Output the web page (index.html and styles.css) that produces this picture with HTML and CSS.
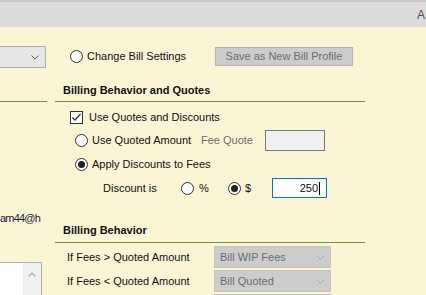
FILE: index.html
```html
<!DOCTYPE html>
<html>
<head>
  <title>Bill Settings</title>
  <link rel="stylesheet" href="styles.css">
</head>
<body>
  <div class="titlebar"><span>A</span></div>

  <div class="pane">
    <div class="left">
      <div class="combo">
        <svg width="8" height="5" viewBox="0 0 8 5"><path d="M0.5 0.5 L4 4 L7.5 0.5" fill="none" stroke="#606060" stroke-width="1"/></svg>
      </div>
      <div class="left-rule"></div>
      <div class="email">am44@h</div>
      <div class="listbox">
        <div class="scroll">
          <svg width="8" height="5" viewBox="0 0 8 5"><path d="M0.5 4.5 L4 1 L7.5 4.5" fill="none" stroke="#b0b0b0" stroke-width="1.2"/></svg>
        </div>
      </div>
    </div>

    <div class="right">
      <div class="top-row">
        <span class="opt"><span class="radio"></span>Change Bill Settings</span>
        <button class="btn">Save as New Bill Profile</button>
      </div>

      <h2 class="group">Billing Behavior and Quotes</h2>

      <div class="row check-row">
        <span class="check">
          <svg width="11" height="11" viewBox="0 0 11 11"><path d="M1.5 5.5 L4 8 L9.5 2" fill="none" stroke="#333" stroke-width="1.3"/></svg>
        </span>
        Use Quotes and Discounts
      </div>

      <div class="row sub">
        <span class="radio"></span>
        <span class="w-quoted">Use Quoted Amount</span>
        <span class="muted w-fee">Fee Quote</span>
        <span class="field disabled"></span>
      </div>

      <div class="row sub">
        <span class="radio on"></span>
        <span>Apply Discounts to Fees</span>
      </div>

      <div class="row disc">
        <span class="w-disc">Discount is</span>
        <span class="radio"></span>
        <span class="w-pct">%</span>
        <span class="radio on"></span>
        <span class="w-usd">$</span>
        <span class="field active">250<i class="caret"></i></span>
      </div>

      <h2 class="group group-low">Billing Behavior</h2>

      <div class="rules">
        <div class="rule-row">
          <span class="w-rule">If Fees &gt; Quoted Amount</span>
          <div class="select">Bill WIP Fees
            <svg width="9" height="5" viewBox="0 0 9 5"><path d="M0.5 0.5 L4.5 4.5 L8.5 0.5" fill="none" stroke="#a8a8a8" stroke-width="1"/></svg>
          </div>
        </div>
        <div class="rule-row">
          <span class="w-rule">If Fees &lt; Quoted Amount</span>
          <div class="select">Bill Quoted
            <svg width="9" height="5" viewBox="0 0 9 5"><path d="M0.5 0.5 L4.5 4.5 L8.5 0.5" fill="none" stroke="#a8a8a8" stroke-width="1"/></svg>
          </div>
        </div>
        <div class="rule-row">
          <span class="w-rule"></span>
          <div class="select"></div>
        </div>
      </div>
    </div>
  </div>
</body>
</html>
```

FILE: styles.css
```css
html,
body {
  margin: 0;
  height: 100%;
  overflow: hidden;
}

body {
  background-color: #faf6d5;
  color: #111;
  font: 11px/1 "Liberation Sans", Arial, sans-serif;
}

.titlebar {
  background-color: #dcdcdc;
  border-top: 2px solid #c6c9cc;
  box-sizing: border-box;
  color: #505050;
  display: flex;
  align-items: center;
  justify-content: flex-end;
  height: 27px;
  font-size: 12px;
  padding-right: 1px;
}

.pane {
  display: flex;
  gap: 7px;
}

/* left column, mostly cut off */
.left {
  width: 48px;
  flex: none;
}

.combo {
  align-items: center;
  background-color: #e6e6e6;
  border: 1px solid #adadad;
  border-left: none;
  box-sizing: border-box;
  display: flex;
  justify-content: flex-end;
  height: 22px;
  margin-top: 19px;
  padding-right: 6px;
  width: 46px;
}

.left-rule {
  border-bottom: 1px solid #808d44;
  box-sizing: border-box;
  height: 34px;
  width: 47px;
}

.email {
  color: #1c2438;
  letter-spacing: -0.8px;
  line-height: 16px;
  margin-top: 108px;
  white-space: nowrap;
}

.listbox {
  background-color: #fff;
  border: 1px solid #b4b4b4;
  border-left: none;
  box-sizing: border-box;
  display: flex;
  justify-content: flex-end;
  height: 60px;
  margin-top: 36px;
  width: 42px;
}

.scroll {
  background-color: #f0f0f0;
  box-sizing: border-box;
  display: flex;
  justify-content: center;
  padding-top: 9px;
  width: 18px;
}

/* right column */
.right {
  width: 310px;
  flex: none;
}

.top-row {
  align-items: center;
  display: flex;
  height: 19px;
  margin-top: 20px;
  padding-left: 15px;
}

.opt {
  align-items: center;
  display: flex;
  gap: 4px;
  width: 145px;
}

.btn {
  background-color: #cccccc;
  border: 1px solid #b3b3b3;
  box-sizing: border-box;
  color: #6d6d6d;
  font: inherit;
  height: 19px;
  padding: 0;
  width: 138px;
}

.group {
  border-bottom: 1px solid #808d44;
  font-size: 11px;
  font-weight: bold;
  height: 21px;
  line-height: 21px;
  margin: 14px 0 0;
  padding-left: 8px;
}

.group-low {
  height: 24px;
  line-height: 24px;
  margin-top: 18px;
}

.row {
  align-items: center;
  display: flex;
  height: 24px;
}

.check-row {
  gap: 6px;
  height: 22px;
  margin-top: 4px;
  padding-left: 15px;
}

.sub {
  gap: 4px;
  padding-left: 20px;
}

.disc {
  padding-left: 48px;
}

.radio {
  background-color: #fff;
  border: 1px solid #333;
  border-radius: 50%;
  box-sizing: border-box;
  display: inline-flex;
  align-items: center;
  justify-content: center;
  flex: none;
  height: 13px;
  width: 13px;
}

.radio.on::after {
  background-color: #222;
  border-radius: 50%;
  content: "";
  height: 7px;
  width: 7px;
}

.check {
  align-items: center;
  background-color: #fff;
  border: 1px solid #333;
  box-sizing: border-box;
  display: flex;
  justify-content: center;
  height: 13px;
  width: 13px;
}

.w-quoted {
  width: 105px;
}

.w-fee {
  width: 60px;
}

.muted {
  color: #6d6d6d;
}

.field {
  box-sizing: border-box;
  display: flex;
  align-items: center;
  justify-content: flex-end;
}

.field.disabled {
  background-color: #f0f0f0;
  border: 1px solid #7a7a7a;
  height: 21px;
  width: 60px;
}

.field.active {
  background-color: #fff;
  border: 1px solid #0078d7;
  height: 20px;
  padding-right: 6px;
  width: 55px;
}

.caret {
  background-color: #000;
  height: 13px;
  margin-left: 1px;
  width: 1px;
}

.w-disc {
  width: 78px;
}

.w-pct {
  box-sizing: border-box;
  padding-left: 5px;
  width: 34px;
}

.w-usd {
  box-sizing: border-box;
  padding-left: 4px;
  width: 31px;
}

.rules {
  display: flex;
  flex-direction: column;
  gap: 2px;
  margin-top: 3px;
}

.rule-row {
  align-items: center;
  display: flex;
  height: 22px;
  padding-left: 12px;
}

.w-rule {
  width: 147px;
}

.select {
  align-items: center;
  background-color: #cccccc;
  border: 1px solid #c9c5b5;
  box-sizing: border-box;
  color: #6d6d6d;
  display: flex;
  justify-content: space-between;
  height: 22px;
  padding: 0 5px;
  width: 117px;
}
```
